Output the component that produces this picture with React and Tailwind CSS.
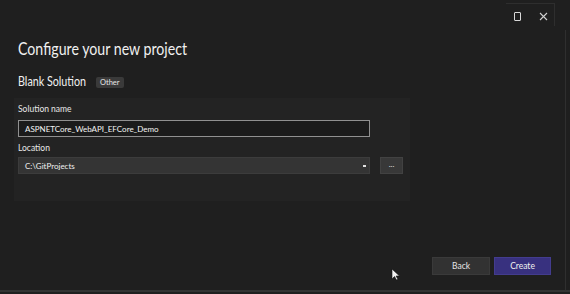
import React from "react";

export default function App() {
  return (
    <div
      className="relative w-[570px] h-[294px] overflow-hidden bg-[#1f1f1f] text-[#f0f0f0]"
      style={{ fontFamily: "Lato, 'Noto Sans', sans-serif" }}
    >
      {/* window chrome */}
      <div className="absolute left-[506px] top-[3px] w-[49px] h-[1px] bg-[#2e2e2e]" />
      <div className="absolute left-[554px] top-[3px] w-[1px] h-[23px] bg-[#2e2e2e]" />
      <div className="absolute left-[514px] top-[12px] w-[7px] h-[9px] border-[1.5px] border-[#d8d8d8] rounded-[1px]" />
      <svg className="absolute left-[539px] top-[12px]" width="9" height="9" viewBox="0 0 9 9">
        <path d="M1 1L8 8M8 1L1 8" stroke="#cfcfcf" strokeWidth="1.1" />
      </svg>

      <div className="flex flex-col pl-[18px] pt-[38px]">
        <h1 className="text-[17.5px] leading-[22px] whitespace-nowrap origin-left scale-x-[0.81]">
          Configure your new project
        </h1>
        <div className="flex items-center mt-[14px]">
          <span className="w-[78px] text-[12.5px] leading-[16px] whitespace-nowrap origin-left scale-x-[0.86]">
            Blank Solution
          </span>
          <span className="bg-[#3a3a3a] text-[#e6e6e6] text-[7.5px] leading-[11px] px-[4px] rounded-[2px]">Other</span>
        </div>
      </div>

      <div className="ml-[14px] mt-[8px] w-[396px] h-[103px] bg-[#232323] pl-[4px] pt-[5px]">
        <div className="text-[8.5px] leading-[12px] text-[#e8e8e8]">Solution name</div>
        <div className="mt-[5px] w-[352px] h-[17px] border border-[#909090] bg-[#1b1b1b] flex items-center pl-[6px] text-[8px] text-[#f4f4f4]">
          ASPNETCore_WebAPI_EFCore_Demo
        </div>
        <div className="mt-[5px] text-[8.5px] leading-[12px] text-[#e8e8e8]">Location</div>
        <div className="mt-[3px] flex items-center gap-[10px]">
          <div className="w-[352px] h-[17px] bg-[#343434] border border-[#3c3c3c] flex items-center justify-between pl-[6px] pr-[3px] text-[8px] text-[#f0f0f0]">
            <span>C:\GitProjects</span>
            <span className="w-[3px] h-[2px] bg-[#e0e0e0]" />
          </div>
          <div className="w-[23px] h-[17px] bg-[#383838] border border-[#424242] flex items-center justify-center text-[8px] leading-none text-[#e0e0e0] pb-[3px]">
            ...
          </div>
        </div>
      </div>

      <div className="absolute right-0 bottom-[19px] flex gap-[4px] pr-[19px]">
        <button className="w-[58px] h-[18px] bg-[#323232] border border-[#3a3a3a] text-[8.5px] text-[#e4e4e4]">Back</button>
        <button className="w-[57px] h-[18px] bg-[#38317f] border border-[#433c8e] text-[8.5px] text-[#f0f0f0]">Create</button>
      </div>

      {/* frame edges */}
      <div className="absolute right-[4px] top-[30px] w-[1px] h-[262px] bg-[#2f2f2f]" />
      <div className="absolute left-0 bottom-[2px] w-full h-[2px] bg-[#333333]" />

      {/* cursor */}
      <svg className="absolute left-[391px] top-[268px]" width="9" height="13" viewBox="0 0 9 13">
        <path d="M1 1V11L3.5 8.5L5.5 12L7 11.3L5 8H8.5Z" fill="#f2f2f2" stroke="#111" strokeWidth="0.6" />
      </svg>
    </div>
  );
}
